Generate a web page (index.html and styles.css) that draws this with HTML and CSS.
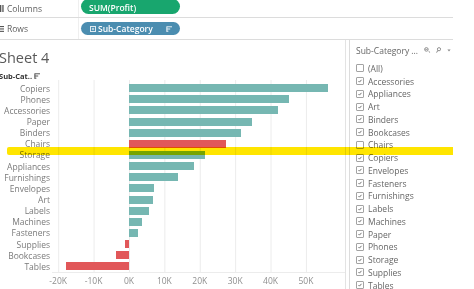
FILE: index.html
```html
<!DOCTYPE html>
<html>
<head>
<meta charset="utf-8">
<link rel="stylesheet" href="styles.css">
</head>
<body>
<div class="app">
  <div class="shelves">
    <div class="shelf shelf-cols">
      <div class="shelf-label">
        <svg class="shelf-icon" width="4" height="7" viewBox="0 0 4 7"><rect x="0" y="0" width="1.3" height="7" fill="#555"/><rect x="2.3" y="0" width="1.3" height="7" fill="#555"/></svg>
        <span>Columns</span>
      </div>
      <div class="shelf-drop">
        <span class="pill pill-measure">SUM(Profit)</span>
      </div>
    </div>
    <div class="shelf shelf-rows">
      <div class="shelf-label">
        <svg class="shelf-icon" width="4" height="6" viewBox="0 0 4 6"><rect x="0" y="0" width="4" height="1.1" fill="#555"/><rect x="0" y="2.4" width="4" height="1.1" fill="#555"/><rect x="0" y="4.8" width="4" height="1.1" fill="#555"/></svg>
        <span>Rows</span>
      </div>
      <div class="shelf-drop">
        <span class="pill pill-dim">
          <svg class="pill-plus" width="6" height="6" viewBox="0 0 6 6"><rect x="0.5" y="0.5" width="5" height="5" fill="none" stroke="#dfeaf1" stroke-width="1"/><path d="M3 1.8V4.2M1.8 3H4.2" stroke="#dfeaf1" stroke-width="0.9"/></svg>
          <span class="pill-text">Sub-Category</span>
          <svg class="pill-sort" width="6" height="6" viewBox="0 0 6 6"><path d="M0.5 0.8H6M0.5 3H4.2M0.5 5.2H2.4M0.9 0.8V5.6" stroke="#e8f0f5" stroke-width="1"/></svg>
        </span>
      </div>
    </div>
  </div>

  <div class="main">
    <div class="sheet">
      <div class="title">Sheet 4</div>
      <div class="col-header">
        <span>Sub-Cat..</span>
        <svg width="6" height="6" viewBox="0 0 6 6"><path d="M0.5 0.8H6M0.5 3H4.2M0.5 5.2H2.4M0.9 0.8V5.6" stroke="#444" stroke-width="0.9"/></svg>
      </div>
      <div class="chart">
        <div class="labels">
          <div class="label">Copiers</div>
          <div class="label">Phones</div>
          <div class="label">Accessories</div>
          <div class="label">Paper</div>
          <div class="label">Binders</div>
          <div class="label">Chairs</div>
          <div class="label">Storage</div>
          <div class="label">Appliances</div>
          <div class="label">Furnishings</div>
          <div class="label">Envelopes</div>
          <div class="label">Art</div>
          <div class="label">Labels</div>
          <div class="label">Machines</div>
          <div class="label">Fasteners</div>
          <div class="label">Supplies</div>
          <div class="label">Bookcases</div>
          <div class="label">Tables</div>
        </div>
        <div class="pane">
          <div class="row"><div class="bar" style="width:198.5px"></div></div>
          <div class="row"><div class="bar" style="width:160px"></div></div>
          <div class="row"><div class="bar" style="width:148.5px"></div></div>
          <div class="row"><div class="bar" style="width:122.5px"></div></div>
          <div class="row"><div class="bar" style="width:111.5px"></div></div>
          <div class="row"><div class="bar bar-red" style="width:96.5px"></div></div>
          <div class="row"><div class="bar" style="width:75.5px"></div></div>
          <div class="row"><div class="bar" style="width:65px"></div></div>
          <div class="row"><div class="bar" style="width:49px"></div></div>
          <div class="row"><div class="bar" style="width:25px"></div></div>
          <div class="row"><div class="bar" style="width:23.5px"></div></div>
          <div class="row"><div class="bar" style="width:20px"></div></div>
          <div class="row"><div class="bar" style="width:12.5px"></div></div>
          <div class="row"><div class="bar" style="width:9px"></div></div>
          <div class="row"><div class="bar bar-red" style="margin-left:73px;width:4px"></div></div>
          <div class="row"><div class="bar bar-red" style="margin-left:64px;width:13px"></div></div>
          <div class="row"><div class="bar bar-red" style="margin-left:14px;width:63px"></div></div>
        </div>
      </div>
      <div class="axis">
        <span class="tick">-20K</span>
        <span class="tick">-10K</span>
        <span class="tick">0K</span>
        <span class="tick">10K</span>
        <span class="tick">20K</span>
        <span class="tick">30K</span>
        <span class="tick">40K</span>
        <span class="tick">50K</span>
      </div>
    </div>

    <div class="filter">
      <div class="filter-head">
        <span class="filter-title">Sub-Category ...</span>
        <svg class="fi fi-mode" width="7" height="6" viewBox="0 0 7 6"><circle cx="2.4" cy="2.4" r="1.8" fill="none" stroke="#777" stroke-width="0.8"/><path d="M1.2 2.4H3.6" stroke="#777" stroke-width="0.7"/><path d="M5 4.2L5.6 5.6" stroke="#777" stroke-width="0.8"/></svg>
        <svg class="fi fi-search" width="5" height="6" viewBox="0 0 5 6"><circle cx="3" cy="2.2" r="1.6" fill="none" stroke="#777" stroke-width="0.8"/><path d="M1.8 3.4L0.6 5.6" stroke="#777" stroke-width="0.9"/></svg>
        <svg class="fi fi-drop" width="4" height="3" viewBox="0 0 4 3"><path d="M0.4 0.6H3.6L2 2.6Z" fill="#888"/></svg>
      </div>
      <div class="filter-list">
        <div class="item"><span class="cb"></span><span>(All)</span></div>
        <div class="item"><span class="cb"><svg viewBox="0 0 8 8"><path d="M2 4.2L3.3 5.5L6 2.4" fill="none" stroke="#444" stroke-width="1"/></svg></span><span>Accessories</span></div>
        <div class="item"><span class="cb"><svg viewBox="0 0 8 8"><path d="M2 4.2L3.3 5.5L6 2.4" fill="none" stroke="#444" stroke-width="1"/></svg></span><span>Appliances</span></div>
        <div class="item"><span class="cb"><svg viewBox="0 0 8 8"><path d="M2 4.2L3.3 5.5L6 2.4" fill="none" stroke="#444" stroke-width="1"/></svg></span><span>Art</span></div>
        <div class="item"><span class="cb"><svg viewBox="0 0 8 8"><path d="M2 4.2L3.3 5.5L6 2.4" fill="none" stroke="#444" stroke-width="1"/></svg></span><span>Binders</span></div>
        <div class="item"><span class="cb"><svg viewBox="0 0 8 8"><path d="M2 4.2L3.3 5.5L6 2.4" fill="none" stroke="#444" stroke-width="1"/></svg></span><span>Bookcases</span></div>
        <div class="item"><span class="cb"></span><span>Chairs</span></div>
        <div class="item"><span class="cb"><svg viewBox="0 0 8 8"><path d="M2 4.2L3.3 5.5L6 2.4" fill="none" stroke="#444" stroke-width="1"/></svg></span><span>Copiers</span></div>
        <div class="item"><span class="cb"><svg viewBox="0 0 8 8"><path d="M2 4.2L3.3 5.5L6 2.4" fill="none" stroke="#444" stroke-width="1"/></svg></span><span>Envelopes</span></div>
        <div class="item"><span class="cb"><svg viewBox="0 0 8 8"><path d="M2 4.2L3.3 5.5L6 2.4" fill="none" stroke="#444" stroke-width="1"/></svg></span><span>Fasteners</span></div>
        <div class="item"><span class="cb"><svg viewBox="0 0 8 8"><path d="M2 4.2L3.3 5.5L6 2.4" fill="none" stroke="#444" stroke-width="1"/></svg></span><span>Furnishings</span></div>
        <div class="item"><span class="cb"><svg viewBox="0 0 8 8"><path d="M2 4.2L3.3 5.5L6 2.4" fill="none" stroke="#444" stroke-width="1"/></svg></span><span>Labels</span></div>
        <div class="item"><span class="cb"><svg viewBox="0 0 8 8"><path d="M2 4.2L3.3 5.5L6 2.4" fill="none" stroke="#444" stroke-width="1"/></svg></span><span>Machines</span></div>
        <div class="item"><span class="cb"><svg viewBox="0 0 8 8"><path d="M2 4.2L3.3 5.5L6 2.4" fill="none" stroke="#444" stroke-width="1"/></svg></span><span>Paper</span></div>
        <div class="item"><span class="cb"><svg viewBox="0 0 8 8"><path d="M2 4.2L3.3 5.5L6 2.4" fill="none" stroke="#444" stroke-width="1"/></svg></span><span>Phones</span></div>
        <div class="item"><span class="cb"><svg viewBox="0 0 8 8"><path d="M2 4.2L3.3 5.5L6 2.4" fill="none" stroke="#444" stroke-width="1"/></svg></span><span>Storage</span></div>
        <div class="item"><span class="cb"><svg viewBox="0 0 8 8"><path d="M2 4.2L3.3 5.5L6 2.4" fill="none" stroke="#444" stroke-width="1"/></svg></span><span>Supplies</span></div>
        <div class="item"><span class="cb"><svg viewBox="0 0 8 8"><path d="M2 4.2L3.3 5.5L6 2.4" fill="none" stroke="#444" stroke-width="1"/></svg></span><span>Tables</span></div>
      </div>
    </div>
  </div>

  <div class="highlight"></div>
</div>
</body>
</html>
```
FILE: styles.css
```css
* { box-sizing: border-box; margin: 0; padding: 0; }
html, body { width: 474px; height: 289px; overflow: hidden; background: #fff; }
body { font-family: "Open Sans", "Noto Sans", sans-serif; color: #666; }

.app { position: relative; width: 474px; height: 289px; display: flex; flex-direction: column; overflow: hidden; }

/* shelves */
.shelves { width: 453px; flex: none; }
.shelf { display: flex; border-bottom: 1px solid #dcdcdc; }
.shelf-cols { height: 18px; }
.shelf-rows { height: 22px; }
.shelf-label { width: 79px; flex: none; display: flex; align-items: center; gap: 3px; font-size: 8.5px; color: #5e5e5e; border-right: 1px solid #efefef; }
.shelf-icon { flex: none; }
.shelf-drop { padding-left: 2px; display: flex; align-items: flex-start; }
.pill { display: flex; align-items: center; width: 99px; color: #fff; font-size: 8.5px; white-space: nowrap; }
.pill-measure { margin-top: -1px; height: 15px; border-radius: 8px; background: #18a66e; padding-left: 8px; font-weight: 600; padding-top: 1px; }
.pill-dim { margin-top: 4px; height: 13px; border-radius: 7px; background: #4b8db0; padding-left: 9px; font-weight: 600; }
.pill-plus { flex: none; }
.pill-text { margin-left: 2px; }
.pill-sort { margin-left: auto; margin-right: 8px; flex: none; }

/* main */
.main { display: flex; flex: 1; min-height: 0; }
.sheet { width: 346px; flex: none; border-right: 1px solid #e3e3e3; display: flex; flex-direction: column; }
.title { margin-top: 8px; margin-left: -1px; font-size: 14.5px; line-height: 20px; color: #5a5a5a; }
.col-header { margin-top: 2px; margin-left: -1px; height: 12px; display: flex; align-items: center; gap: 2px; font-size: 7.5px; font-weight: 700; color: #333; }

.chart { display: flex; margin-top: -2px; }
.labels { width: 52px; flex: none; padding-top: 3px; padding-right: 2px; text-align: right; }
.label { height: 11.15px; line-height: 11.15px; font-size: 8.5px; color: #7a7a7a; white-space: nowrap; }
.pane {
  flex: 1;
  padding-top: 3px;
  border-bottom: 1px solid #ececec;
  background:
    linear-gradient(90deg, transparent 256px, #fff 256px),
    linear-gradient(90deg, #ebebeb 1px, transparent 1px) 6.2px 0 / 35.4px 100%;
}
.row { height: 11.15px; padding-top: 1.5px; }
.bar { height: 8px; margin-left: 77px; background: #76b7b2; }
.bar-red { background: #e15759; }

.axis { display: flex; margin-left: 40.5px; height: 16px; line-height: 16px; }
.tick { width: 35.4px; flex: none; text-align: center; font-size: 8.5px; color: #8f8f8f; }

/* filter card */
.filter { margin-left: 3px; width: 104px; flex: none; border-left: 1px solid #dcdcdc; }
.filter-head { height: 20px; display: flex; align-items: center; padding-left: 6px; font-size: 8.5px; color: #666; white-space: nowrap; }
.filter-title { flex: 1; }
.fi { flex: none; }
.fi-mode { margin-right: 5px; }
.fi-search { margin-right: 6px; }
.fi-drop { margin-right: 2px; }
.filter-list { padding-top: 2px; }
.item { height: 12.75px; display: flex; align-items: center; gap: 4px; padding-left: 6px; font-size: 8.5px; color: #666; white-space: nowrap; }
.cb { width: 8px; height: 8px; flex: none; border: 1px solid #a3a3a3; border-radius: 1px; background: #fff; display: flex; }
.cb svg { width: 6px; height: 6px; }

/* marker highlight over the chart */
.highlight { position: absolute; left: 7px; top: 147px; width: 446px; height: 7.5px; background: #ffe500; mix-blend-mode: multiply; border-radius: 2px 0 0 2px; }
```
